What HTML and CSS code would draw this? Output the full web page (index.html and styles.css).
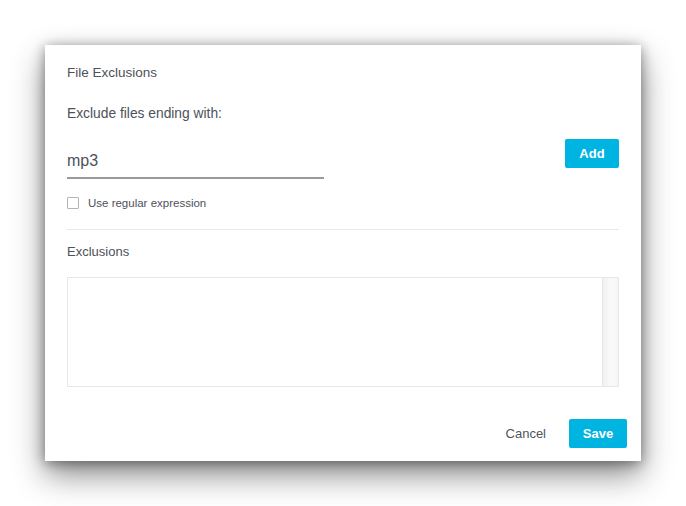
FILE: index.html
```html
<!DOCTYPE html>
<html>
<head>
<meta charset="utf-8">
<link rel="stylesheet" href="styles.css">
</head>
<body>
<div class="dialog">
  <div class="title">File Exclusions</div>
  <div class="label">Exclude files ending with:</div>
  <div class="input-row">
    <div class="field">mp3</div>
    <button class="btn btn-add">Add</button>
  </div>
  <div class="check-row">
    <span class="checkbox"></span>
    <span class="check-label">Use regular expression</span>
  </div>
  <div class="divider"></div>
  <div class="section">Exclusions</div>
  <div class="list">
    <div class="list-body"></div>
    <div class="scroll-track"></div>
  </div>
  <div class="footer">
    <button class="btn-text">Cancel</button>
    <button class="btn btn-save">Save</button>
  </div>
</div>
</body>
</html>
```
FILE: styles.css
```css
html, body {
  margin: 0;
  padding: 0;
  background: #ffffff;
}
body {
  font-family: "Liberation Sans", Arial, sans-serif;
  color: #4d515a;
  width: 686px;
  height: 506px;
  overflow: hidden;
}
.dialog {
  box-sizing: border-box;
  width: 596px;
  height: 416px;
  margin: 45px 0 0 45px;
  padding: 20px 22px 0 22px;
  background: #ffffff;
  box-shadow: 0 14px 30px rgba(0, 0, 0, 0.45), 0 2px 12px rgba(0, 0, 0, 0.4);
  display: flex;
  flex-direction: column;
}
.title {
  font-size: 13.5px;
  line-height: 16px;
}
.label {
  margin-top: 25px;
  font-size: 13.8px;
  line-height: 16px;
}
.input-row {
  margin-top: 17px;
  display: flex;
  justify-content: space-between;
  align-items: flex-start;
}
.field {
  width: 257px;
  padding: 12px 0 6px 0;
  font-size: 16px;
  line-height: 20px;
  color: #4d515a;
  border-bottom: 2px solid #9a9a9a;
}
.btn {
  border: none;
  border-radius: 2px;
  background: #00b4e2;
  color: #ffffff;
  font-family: "Liberation Sans", Arial, sans-serif;
  font-weight: bold;
  font-size: 13px;
  height: 29px;
  padding: 0;
  cursor: pointer;
}
.btn-add {
  width: 54px;
}
.check-row {
  margin-top: 18px;
  display: flex;
  align-items: center;
  height: 12px;
}
.checkbox {
  box-sizing: border-box;
  width: 12px;
  height: 12px;
  border: 1px solid #b4b4b4;
  border-radius: 1px;
  background: #ffffff;
}
.check-label {
  margin-left: 9px;
  font-size: 11.5px;
  line-height: 12px;
}
.divider {
  margin-top: 20px;
  height: 1px;
  background: #e8e8e8;
}
.section {
  margin-top: 14px;
  font-size: 13px;
  line-height: 16px;
}
.list {
  margin-top: 17px;
  box-sizing: border-box;
  height: 110px;
  border: 1px solid #e6e6e6;
  display: flex;
}
.list-body {
  flex: 1;
}
.scroll-track {
  width: 15px;
  border-left: 1px solid #e6e6e6;
  background: linear-gradient(to right, #f0f0f0, #fafafa 50%, #f6f6f6);
}
.footer {
  margin-top: 32px;
  margin-right: -8px;
  display: flex;
  justify-content: flex-end;
  align-items: center;
}
.btn-text {
  border: none;
  background: transparent;
  padding: 0;
  margin-right: 23px;
  font-family: "Liberation Sans", Arial, sans-serif;
  font-size: 13px;
  color: #50545c;
  cursor: pointer;
}
.btn-save {
  width: 58px;
}
```
